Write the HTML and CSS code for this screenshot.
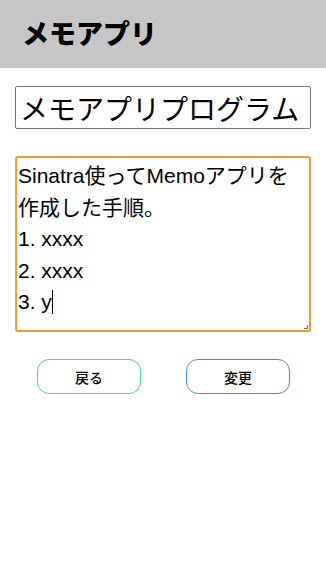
FILE: index.html
```html
<!DOCTYPE html>
<html lang="ja">
<head>
<meta charset="utf-8">
<link rel="stylesheet" href="styles.css">
</head>
<body>
<header class="header"><h1 class="title">メモアプリ</h1></header>
<main class="main">
  <input class="memo-title" type="text" value="メモアプリプログラム">
  <div class="memo-body">Sinatra使ってMemoアプリを<br>作成した手順。<br>1. xxxx<br>2. xxxx<br>3. y<span class="caret"></span><span class="grip"></span></div>
  <div class="buttons">
    <button class="btn btn-back">戻る</button>
    <button class="btn btn-change">変更</button>
  </div>
</main>
</body>
</html>
```
FILE: styles.css
```css
html, body { margin: 0; padding: 0; background: #fff; }
body { font-family: "Liberation Sans", "Noto Sans CJK JP", sans-serif; color: #000; }
.header { background: #c6c6c6; height: 68px; display: flex; align-items: center; padding-left: 22px; box-sizing: border-box; }
.title { margin: 0; font-size: 27px; font-weight: 900; font-family: "Noto Sans CJK JP", sans-serif; line-height: 1; position: relative; top: -2px; }
.main { padding: 18px 15px 0 15px; display: flex; flex-direction: column; }
.memo-title { box-sizing: border-box; width: 296px; height: 43px; border: 1px solid #767676; border-radius: 2px; font-size: 28px; font-family: "Noto Sans CJK JP", sans-serif; padding: 0 4px; margin: 0; color: #000; outline: none; }
.memo-body { box-sizing: border-box; width: 296px; height: 176px; margin-top: 27px; border: 2px solid #f39a2d; border-radius: 3px; font-size: 21px; line-height: 31.5px; padding: 2px 1px 0; white-space: nowrap; overflow: hidden; position: relative; }
.caret { display: inline-block; width: 1px; height: 24px; background: #000; vertical-align: -5px; }
.grip { position: absolute; right: 1px; bottom: 1px; width: 3px; height: 3px; border-right: 1px solid #777; border-bottom: 1px solid #777; }
.buttons { display: flex; gap: 45px; padding-left: 22px; margin-top: 27px; }
.btn { width: 104px; height: 35px; background: #fff; border-radius: 12px; font-size: 14px; font-weight: 500; font-family: "Noto Sans CJK JP", sans-serif; color: #000; padding: 0; cursor: pointer; }
.btn-back { border: 1.5px solid #35dba0; }
.btn-change { border: 1.5px solid #3a8fdc; }
```
